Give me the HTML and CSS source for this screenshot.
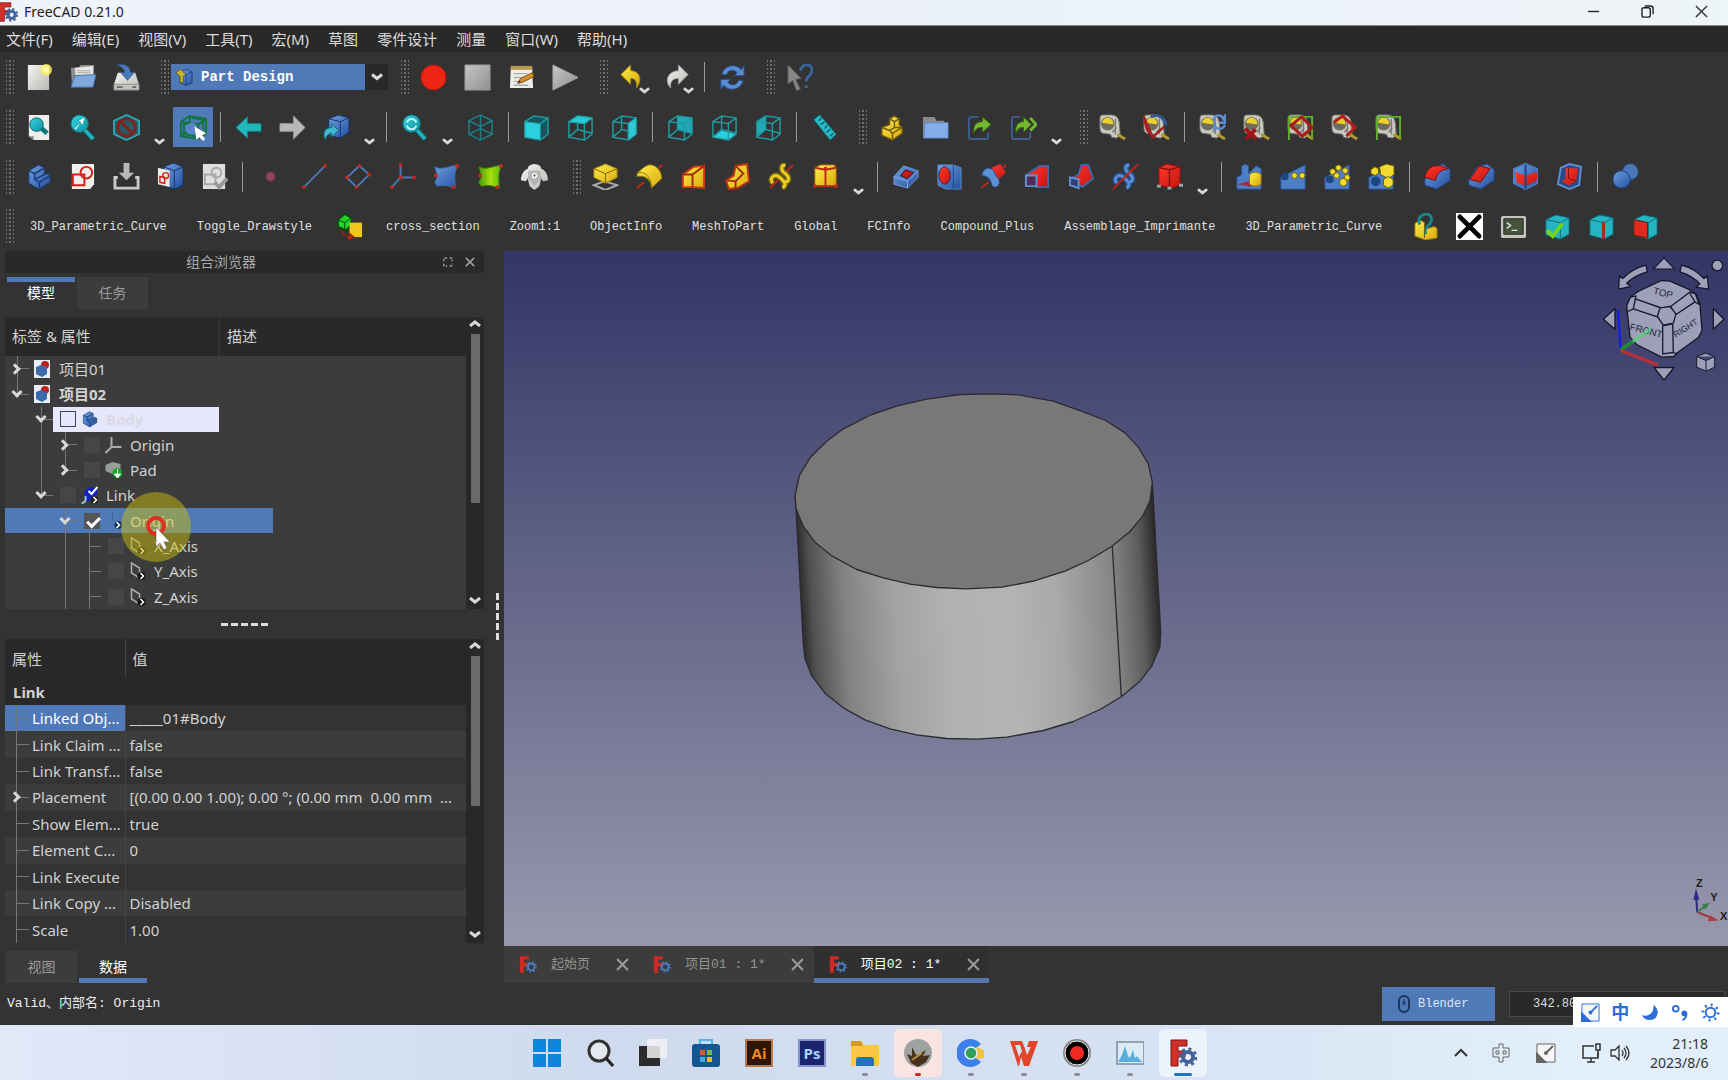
FILE: index.html
```html
<!DOCTYPE html>
<html lang="zh-CN">
<head>
<meta charset="utf-8">
<title>FreeCAD 0.21.0</title>
<link rel="stylesheet" href="styles.css">
</head>
<body>
<svg class="sprite" aria-hidden="true">
  <defs>
    <linearGradient id="gray" x1="0" y1="0" x2="1" y2="1"><stop offset="0" stop-color="#f4f4f0"/><stop offset="1" stop-color="#b8b8b4"/></linearGradient>
    <linearGradient id="dull" x1="0" y1="0" x2="1" y2="1"><stop offset="0" stop-color="#c8c8c8"/><stop offset="1" stop-color="#8e8e8e"/></linearGradient>
    <linearGradient id="blue" x1="0" y1="0" x2="1" y2="1"><stop offset="0" stop-color="#6f9fe0"/><stop offset="1" stop-color="#2350a0"/></linearGradient>
    <linearGradient id="yel" x1="0" y1="0" x2="1" y2="1"><stop offset="0" stop-color="#fdf04a"/><stop offset="1" stop-color="#d8a80c"/></linearGradient>
    <linearGradient id="red" x1="0" y1="0" x2="1" y2="1"><stop offset="0" stop-color="#ff3a2a"/><stop offset="1" stop-color="#c41410"/></linearGradient>
    <linearGradient id="teal" x1="0" y1="0" x2="1" y2="1"><stop offset="0" stop-color="#35d4e2"/><stop offset="1" stop-color="#12909c"/></linearGradient>
    <linearGradient id="green" x1="0" y1="0" x2="1" y2="0"><stop offset="0" stop-color="#4c9a08"/><stop offset=".5" stop-color="#a5e010"/><stop offset="1" stop-color="#5cb010"/></linearGradient>
  </defs>

  <symbol id="new" viewBox="0 0 28 28"><path d="M3 1h22v26H3z" fill="url(#gray)"/><circle cx="22" cy="6" r="6" fill="#f8f060" opacity=".85"/><circle cx="22" cy="6" r="3" fill="#fffcb0"/></symbol>
  <symbol id="open" viewBox="0 0 28 28"><path d="M2 4h8l2-3h14v20H3z" fill="#8d8d8a"/><path d="M6 4l19-2v14H7z" fill="#e6e6e2"/><path d="M8 7h14M8 9h14" stroke="#aaa"/><path d="M6 12l22-1-3 13H2z" fill="#7fa8dc" stroke="#3f6cab"/></symbol>
  <symbol id="save" viewBox="0 0 28 28"><path d="M5 9h18l4 12v6H1v-6z" fill="url(#gray)"/><path d="M1 21h26v6H1z" fill="#c4c4c0" stroke="#8a8a86"/><path d="M4 24h6M20 24h4" stroke="#666" stroke-width="2"/><path d="M4 1c9-2 14 2 14 8h4l-7 8-7-8h4c0-4-3-6-8-8z" fill="#4a78bd" stroke="#2c5490" stroke-width=".6"/></symbol>
  <symbol id="pd" viewBox="0 0 28 28"><path d="M8 6l10-4 8 4v16l-9 4-9-4z" fill="url(#blue)" stroke="#163465"/><path d="M8 6l9 4 9-4M17 10v16" fill="none" stroke="#163465"/><path d="M2 7l7-5 8 8-4 2v10l-5-1V12z" fill="#c9b62c" stroke="#4d4612"/></symbol>
  <symbol id="rec" viewBox="0 0 28 28"><circle cx="14" cy="14" r="13" fill="#ee2414" stroke="#b3170c"/></symbol>
  <symbol id="stop" viewBox="0 0 28 28"><path d="M1 1h26v26H1z" fill="url(#dull)" stroke="#999"/></symbol>
  <symbol id="macro" viewBox="0 0 28 28"><path d="M3 2h22l1 23H2z" fill="#eeeeea"/><path d="M3 2h22v4H3z" fill="#b49a4a"/><path d="M6 10h14M6 14h11M6 18h7M6 22h15" stroke="#aaa" stroke-width="1.5"/><path d="M10 20l3-5 12-6 2 4-12 6z" fill="#d58d2b" stroke="#84500d"/><path d="M10 20l3-1-1-2z" fill="#222"/></symbol>
  <symbol id="play" viewBox="0 0 28 28"><path d="M1 1l26 13L1 27z" fill="url(#dull)" stroke="#a5a5a5"/></symbol>
  <symbol id="undo" viewBox="0 0 28 28"><path d="M2 11L12 1v6c9 0 13 9 6 18 1-7-1-10-6-10v6z" fill="url(#yel)" stroke="#a8850d"/></symbol>
  <symbol id="redo" viewBox="0 0 28 28"><path d="M26 11L16 1v6C7 7 0 16 8 25c-1-7 2-10 8-10v6z" fill="url(#gray)" stroke="#999"/></symbol>
  <symbol id="refresh" viewBox="0 0 28 28"><path d="M3 11C5 1 18-1 23 6l3-4v10H16l3-3c-5-5-10-2-11 2zM25 17C23 27 10 29 5 22l-3 4V16h10l-3 3c5 5 10 2 11-2z" fill="#5b8bd0" stroke="#2a5292"/></symbol>
  <symbol id="whats" viewBox="0 0 28 28"><path d="M2 1l14 14-6 1 5 10-4 2-4-11-5 4z" fill="#888" stroke="#555"/><path d="M15 7c1-8 13-8 12 0 0 5-6 5-6 11M21 22v3" fill="none" stroke="#3c6498" stroke-width="3"/></symbol>

  <symbol id="fitall" viewBox="0 0 28 28"><path d="M4 1h21v26H9l-5-4z" fill="#efefea"/><path d="M4 23h5v4z" fill="#888"/><path d="M16 14l7 6" stroke="#12757e" stroke-width="5"/><circle cx="12" cy="11" r="7" fill="url(#teal)" stroke="#0b6670"/></symbol>
  <symbol id="lens" viewBox="0 0 28 28"><path d="M16 16l9 10" stroke="#0d7f8a" stroke-width="5"/><path d="M16 16l9 10" stroke="#23b5c2" stroke-width="3"/><circle cx="11" cy="10" r="9" fill="url(#teal)" stroke="#0b7882"/></symbol>
  <symbol id="fitsel" viewBox="0 0 28 28"><use href="#lens"/><path d="M6 15l7-7-3-1 6-3-2 7-2-2-5 7z" fill="#fff"/></symbol>
  <symbol id="draw" viewBox="0 0 28 28"><path d="M14 1l13 6v14l-13 6-13-6V7z" fill="#2a5a62" stroke="#27a6b0" stroke-width="2"/><circle cx="14" cy="14" r="9" fill="none" stroke="#7c2422" stroke-width="3"/><path d="M8 8l12 12" stroke="#7c2422" stroke-width="3"/></symbol>
  <symbol id="selbox" viewBox="0 0 28 28"><path d="M1 8l9-6 17 3v15l-8 6-18-3zM1 8l18 3v15M19 11l8-6M10 2v14l17 4M10 16l-9 7M4 10l12 2v11l-12-2zM12 4l12 2v11" fill="none" stroke="#117540" stroke-width="2"/><circle cx="12" cy="15" r="6" fill="#5b83c8"/><path d="M15 13l12 7-4 2 3 4-2 2-4-4-3 3z" fill="#fff"/></symbol>
  <symbol id="back" viewBox="0 0 28 28"><path d="M1 14L13 3v7h14v8H13v7z" fill="#20b7bd" stroke="#0f8288"/></symbol>
  <symbol id="fwd" viewBox="0 0 28 28"><path d="M27 14L15 2v8H1v8h14v8z" fill="#b8b8b6" stroke="#999"/></symbol>
  <symbol id="linkgo" viewBox="0 0 28 28"><path d="M6 5l10-4 11 3v15l-9 6-12-3z" fill="url(#blue)" stroke="#163465"/><path d="M6 5l12 3 9-4M18 8v17" fill="none" stroke="#163465"/><path d="M2 27c-3-9 1-13 7-13v-4l7 7-7 7v-4c-3 0-5 2-7 7z" fill="#3fb8d4" stroke="#13606f"/></symbol>
  <symbol id="sync" viewBox="0 0 28 28"><use href="#lens"/><path d="M6 9c2-5 8-5 10 0M16 12c-2 5-8 5-10 0" fill="none" stroke="#bff4f4" stroke-width="2"/></symbol>
  <symbol id="iso" viewBox="0 0 28 28"><path d="M14 1l12 6v14l-12 6-12-6V7zM2 7l12 6 12-6M14 13v14M14 1v14M2 21l12-6 12 6" fill="none" stroke="#1a8289" stroke-width="1.5"/></symbol>
  <symbol id="wire" viewBox="0 0 28 28"><path d="M2 8l9-6 15 2v17l-8 6-16-3zM2 8l16 2v17M18 10l8-6M11 2v14l15 4M11 16l-9 8" fill="none" stroke="#1c9da3" stroke-width="1.5"/></symbol>
  <symbol id="vfront" viewBox="0 0 28 28"><path d="M2 8l9-6 15 2-8 6zM18 10l8-6v17l-8 6z" fill="#15565c"/><path d="M2 8l9-6 15 2v17l-8 6-16-3zM18 10l8-6" fill="none" stroke="#1c9da3" stroke-width="1.5"/><path d="M2 8l16 2v17l-16-3z" fill="#2cd0dd" stroke="#1c9da3"/></symbol>
  <symbol id="vtop" viewBox="0 0 28 28"><use href="#wire"/><path d="M2 8l9-6 15 2-8 6z" fill="#2cc8d6" stroke="#1c9da3"/></symbol>
  <symbol id="vright" viewBox="0 0 28 28"><use href="#wire"/><path d="M18 10l8-6v17l-8 6z" fill="#2cc8d6" stroke="#1c9da3"/></symbol>
  <symbol id="vrear" viewBox="0 0 28 28"><path d="M11 2l15 2v16l-15-4z" fill="#22a8b6"/><use href="#wire"/></symbol>
  <symbol id="vbottom" viewBox="0 0 28 28"><path d="M11 17l15 4-8 6-16-3z" fill="#2cd0dd"/><use href="#wire"/></symbol>
  <symbol id="vleft" viewBox="0 0 28 28"><path d="M2 8l9-6v14l-9 8z" fill="#22a8b6"/><use href="#wire"/></symbol>
  <symbol id="ruler" viewBox="0 0 28 28"><path d="M3 6l6-5 17 20-6 6z" fill="#27bdc8" stroke="#0e7d86"/><path d="M11 4l-3 3m6 1l-4 3m7 1l-3 3m6 1l-4 3m7 1l-3 3" stroke="#0c5d65" stroke-width="1.5"/></symbol>

  <symbol id="part" viewBox="0 0 28 28"><path d="M4 14l8-3V5l5-3 5 3v6l3 3v6l-10 7-11-5z" fill="url(#yel)" stroke="#6e5a08" stroke-width="1.5"/><path d="M12 5l5 3 5-3M17 8v6l-5 3-8-3M17 14l8 0M12 17l3 3 10-6M15 20v7" fill="none" stroke="#6e5a08" stroke-width="1.5"/></symbol>
  <symbol id="group" viewBox="0 0 28 28"><path d="M1 3h12l2 4h8v18H1z" fill="#8b8b8b"/><path d="M3 9h24v16H2z" fill="#85aee8" stroke="#5b86c4"/></symbol>
  <symbol id="link" viewBox="0 0 28 28"><path d="M13 3H6Q3 3 3 6v17q0 3 3 3h14q3 0 3-3v-4" fill="none" stroke="#3d5f93" stroke-width="2"/><path d="M8 20c-1-9 3-12 9-12V3l9 8-9 8v-5c-4 0-7 1-9 6z" fill="#73b82e" stroke="#2f6310"/></symbol>
  <symbol id="links" viewBox="0 0 28 28"><path d="M10 3H5Q2 3 2 6v17q0 3 3 3h13q3 0 3-3v-4" fill="none" stroke="#3d5f93" stroke-width="2"/><path d="M6 20c-1-9 3-12 8-12V3l8 8-8 8v-5c-4 0-6 1-8 6z" fill="#73b82e" stroke="#2f6310"/><path d="M21 4l6 7-6 6" fill="none" stroke="#73b82e" stroke-width="3"/></symbol>
  <symbol id="tape" viewBox="0 0 28 28"><path d="M1 4q0-3 3-3l9 0q7 0 8 8l1 13-4 3-5-1-1-3-8-1q-3-1-3-5z" fill="#c9c9c3" stroke="#77776e"/><circle cx="9" cy="10" r="7" fill="#6d6c5e"/><path d="M3 9Q5 3 10 4q5 1 5 7z" fill="#ecd02a"/><path d="M17 5v16M14 19l4-5" stroke="#7c7c74" stroke-width="1.5"/><path d="M19 21l8 5" stroke="#b09a28" stroke-width="3"/></symbol>
  <symbol id="tapeang" viewBox="0 0 28 28"><use href="#tape"/><path d="M1 3l9 21 12-11M1 3l3 13 6 8" fill="none" stroke="#a8201c" stroke-width="2.5"/><path d="M8 3c8-4 15 2 16 9" fill="none" stroke="#2f5a96" stroke-width="3"/></symbol>
  <symbol id="taperef" viewBox="0 0 28 28"><use href="#tape"/><path d="M15 7c1-7 8-7 10-2l2-3v7h-6M27 11c-2 5-8 6-11 1v5" fill="none" stroke="#5b8bd0" stroke-width="2.5"/></symbol>
  <symbol id="tapedel" viewBox="0 0 28 28"><use href="#tape"/><path d="M2 15l12 11M13 16L3 26" stroke="#a41414" stroke-width="4"/></symbol>
  <symbol id="tapeall" viewBox="0 0 28 28"><use href="#tape"/><path d="M2 27V3h24v23" fill="none" stroke="#5fae28" stroke-width="2"/><path d="M15 3l11 11-10 9L4 12z" fill="none" stroke="#a81c18" stroke-width="3"/></symbol>
  <symbol id="tape3d" viewBox="0 0 28 28"><use href="#tape"/><path d="M3 9l9-7 13 12-9 9" fill="none" stroke="#b91c18" stroke-width="3"/></symbol>
  <symbol id="tapedelta" viewBox="0 0 28 28"><use href="#tape"/><path d="M2 27V3h24v23" fill="none" stroke="#5fae28" stroke-width="2"/></symbol>

  <symbol id="body" viewBox="0 0 28 28"><path d="M4 8l10-6 6 3v7l3-1 3 2v7l-12 7L4 21z" fill="url(#blue)" stroke="#173b74"/><path d="M4 8l6 3 10-6M10 11v6l5 3 11-7M10 17l10-5M15 20v7" fill="none" stroke="#173b74" stroke-width="1.5"/></symbol>
  <symbol id="sketch" viewBox="0 0 28 28"><path d="M3 1h23v21l-4 5H3z" fill="#f0f0ec"/><path d="M4 12h12v11H4z" fill="none" stroke="#d0201a" stroke-width="2"/><circle cx="18" cy="10" r="6" fill="none" stroke="#d0201a" stroke-width="2"/></symbol>
  <symbol id="edit" viewBox="0 0 28 28"><path d="M11 0h6v10h5l-8 8-8-8h5z" fill="#b8b8b6"/><path d="M5 15H2v11h24V15h-3" fill="none" stroke="#c9c9c9" stroke-width="3"/></symbol>
  <symbol id="mapsk" viewBox="0 0 28 28"><path d="M7 4l10-4 10 4v19l-9 4-11-4z" fill="url(#blue)" stroke="#163465"/><path d="M18 8v19M7 4l11 4 9-4" stroke="#163465" fill="none"/><path d="M1 5l12 3v17L1 22z" fill="#eeeeea"/><path d="M3 14l5 1v6l-5-1z" fill="none" stroke="#d0201a" stroke-width="1.5"/><circle cx="9" cy="13" r="3" fill="none" stroke="#d0201a" stroke-width="1.5"/></symbol>
  <symbol id="valid" viewBox="0 0 28 28"><path d="M2 1h23v26H2z" fill="#dededc"/><path d="M4 12h11v10H4z" fill="none" stroke="#a8a8a6" stroke-width="2"/><circle cx="16" cy="10" r="5" fill="none" stroke="#a8a8a6" stroke-width="2"/><path d="M14 20l5 5 8-9" fill="none" stroke="#9a9a98" stroke-width="4"/></symbol>
  <symbol id="pt" viewBox="0 0 28 28"><circle cx="14" cy="14" r="5" fill="#8d4460" stroke="#5e2a42"/></symbol>
  <symbol id="line" viewBox="0 0 28 28"><path d="M3 25L25 3" stroke="#4b78b8" stroke-width="2"/><circle cx="3" cy="25" r="2" fill="#c4271c"/><circle cx="25" cy="3" r="2" fill="#c4271c"/></symbol>
  <symbol id="plane" viewBox="0 0 28 28"><path d="M2 15L15 3l10 9-13 13z" fill="none" stroke="#4b78b8" stroke-width="2"/><g fill="#c4271c"><circle cx="2" cy="15" r="2"/><circle cx="15" cy="3" r="2"/><circle cx="25" cy="12" r="2"/><circle cx="12" cy="25" r="2"/></g></symbol>
  <symbol id="lcs" viewBox="0 0 28 28"><path d="M12 2v13h14M12 15L3 25" fill="none" stroke="#4b78b8" stroke-width="2"/><g fill="#c4271c"><circle cx="12" cy="2" r="2"/><circle cx="12" cy="15" r="2"/><circle cx="26" cy="15" r="2"/><circle cx="3" cy="25" r="2"/></g></symbol>
  <symbol id="binder" viewBox="0 0 28 28"><path d="M2 4c7 4 15-1 24-2-5 8-3 15-3 24-6-2-12-4-18-2-2-1-3-3-3-5 4-3 2-8 0-15z" fill="url(#blue)" stroke="#3b6cba"/><g fill="#c4271c"><circle cx="25" cy="3" r="2"/><circle cx="3" cy="13" r="2"/><circle cx="21" cy="25" r="2"/></g></symbol>
  <symbol id="subbinder" viewBox="0 0 28 28"><path d="M2 4c7 4 15-1 24-2-5 8-3 15-3 24-6-2-12-4-18-2-2-1-3-3-3-5 4-3 2-8 0-15z" fill="url(#green)" stroke="#3b8a10"/><g fill="#c4271c"><circle cx="25" cy="3" r="2"/><circle cx="3" cy="13" r="2"/><circle cx="21" cy="25" r="2"/></g></symbol>
  <symbol id="clone" viewBox="0 0 28 28"><path d="M8 3q6-4 12 0l1 3c5 2 7 7 7 12l-5 1-2-3-2 8-5 4-5-4-2-8-2 3-5-1C0 13 2 8 7 6z" fill="url(#gray)"/><path d="M8 8l12 0 1 8-7 8-7-8z" fill="#b4b4b2"/><circle cx="14" cy="13" r="3" fill="#eee"/><circle cx="14" cy="13" r="1" fill="#444"/></symbol>

  <symbol id="pad" viewBox="0 0 28 28"><path d="M2 23l11-4 13 4-12 5z" fill="none" stroke="#aaa" stroke-width="2"/><path d="M2 6l12-5 12 5v9l-12 6-12-6z" fill="url(#yel)" stroke="#a18312"/><path d="M2 6l12 5 12-5M14 11v10" fill="none" stroke="#7c6409"/></symbol>
  <symbol id="rev" viewBox="0 0 28 28"><path d="M1 11C5 7 9 3 13 2c7-1 13 5 14 14l-11 10c0-8-6-14-15-12z" fill="url(#yel)" stroke="#8a7008"/><path d="M1 11c8-4 15 4 15 15" fill="none" stroke="#8a7008"/><path d="M1 26l7-6M23 6l4-4" stroke="#c4271c" stroke-width="2"/></symbol>
  <symbol id="loft" viewBox="0 0 28 28"><path d="M3 12L14 4l11-1v23l-12-1H3z" fill="url(#yel)" stroke="#d03610" stroke-width="2"/><path d="M3 12h10v13M13 12l12-9" fill="none" stroke="#a42a0c" stroke-width="2"/></symbol>
  <symbol id="pipe" viewBox="0 0 28 28"><path d="M2 18l8-5 2-10 12-2 2 18-12 7-9 1z" fill="url(#yel)" stroke="#c03010" stroke-width="2"/><path d="M2 18l10 1v8M12 19l8-8L12 3" fill="none" stroke="#a42a0c" stroke-width="2"/></symbol>
  <symbol id="helix" viewBox="0 0 28 28"><path d="M2 26L26 2" stroke="#c4271c" stroke-width="2"/><path d="M18 2c-5 0-5 6 0 9 5 4 4 10-1 8M15 26c6-4 0-9-4-12-5-3-10 2-6 7" fill="none" stroke="#7d680e" stroke-width="6"/><path d="M18 2c-5 0-5 6 0 9 5 4 4 10-1 8M15 26c6-4 0-9-4-12-5-3-10 2-6 7" fill="none" stroke="#e8ce24" stroke-width="3"/></symbol>
  <symbol id="prim" viewBox="0 0 28 28"><path d="M3 5l6-3h14l2 3v19H3z" fill="url(#yel)" stroke="#c46a10"/><path d="M14 5v19M3 24h22M3 5l11 2 11-2" stroke="#b72a10" stroke-width="2" fill="none"/><g fill="#c4271c"><circle cx="14" cy="6" r="2"/><circle cx="3" cy="24" r="2"/><circle cx="25" cy="24" r="2"/></g></symbol>
  <symbol id="pocket" viewBox="0 0 28 28"><path d="M2 14L12 3l15 5v7L16 26 2 22z" fill="url(#blue)" stroke="#6b98d8"/><path d="M2 14l14 5 11-11M16 19v7" fill="none" stroke="#8ab0e8"/><path d="M9 13l5-6 8 3-6 6z" fill="#c41c18" stroke="#470a08"/></symbol>
  <symbol id="hole" viewBox="0 0 28 28"><path d="M2 2h16l8 3v22H10l-8-4z" fill="url(#blue)" stroke="#5b88cc"/><path d="M18 2v25" stroke="#1e478a"/><ellipse cx="9" cy="13" rx="6" ry="9" fill="url(#red)" stroke="#163465"/></symbol>
  <symbol id="groove" viewBox="0 0 28 28"><path d="M12 5l9-4 6 9-8 7z" fill="url(#red)"/><path d="M2 13C3 4 12 3 15 10c1 5 5 5 5 10 0 5-6 7-8 2-1-6-5-9-10-9z" fill="#5d8fd2" stroke="#25569c"/><path d="M1 26l8-6M23 6l4-4" stroke="#c4271c" stroke-width="2"/></symbol>
  <symbol id="sloft" viewBox="0 0 28 28"><path d="M3 12L16 3h9v22H13z" fill="url(#red)" stroke="#3d68aa" stroke-width="2"/><path d="M2 13h11v11H2z" fill="#4b2d55" stroke="#6590d0" stroke-width="2"/></symbol>
  <symbol id="spipe" viewBox="0 0 28 28"><path d="M3 16l8-4L14 2l7 0 5 14-11 9z" fill="url(#red)" stroke="#3d68aa" stroke-width="2"/><path d="M2 15l9 2v9l-9-3z" fill="#2a3f74" stroke="#6590d0" stroke-width="2"/></symbol>
  <symbol id="shelix" viewBox="0 0 28 28"><path d="M18 2c-5 0-5 6 0 9 5 4 4 10-1 8M15 26c6-4 0-9-4-12-5-3-10 2-6 7" fill="none" stroke="#23508e" stroke-width="6"/><path d="M18 2c-5 0-5 6 0 9 5 4 4 10-1 8M15 26c6-4 0-9-4-12-5-3-10 2-6 7" fill="none" stroke="#5a8cd4" stroke-width="3"/><path d="M1 27L27 1" stroke="#b4271c" stroke-width="2"/></symbol>
  <symbol id="sprim" viewBox="0 0 28 28"><path d="M3 5l8-4 14 3v19l-9 3-13-3z" fill="url(#red)" stroke="#8c100c"/><path d="M14 7v19M3 5l11 2 11-3" stroke="#8c100c" stroke-width="1.5" fill="none"/><path d="M1 24h4M12 26h4M24 23h4" stroke="#9aa" stroke-width="3"/></symbol>

  <symbol id="step" viewBox="0 0 28 28"><path d="M1 27V15L26 2v25z" fill="#4d7fc8" stroke="#2d5a9e"/></symbol>
  <symbol id="mirror" viewBox="0 0 28 28"><path d="M1 27V15l5-3V3q4-3 7 0v8l8-8 5 3v21z" fill="#4d7fc8" stroke="#2d5a9e"/><path d="M1 22l12-3 3 6z" fill="#9c3040"/><path d="M14 12q6-5 12 0v10q-6 4-12 0z" fill="url(#yel)" stroke="#8c7309"/></symbol>
  <symbol id="linpat" viewBox="0 0 28 28"><use href="#step"/><circle cx="5" cy="14" r="4" fill="#1d4684"/><g fill="#f3dc31" stroke="#695607"><circle cx="15" cy="13" r="3"/><circle cx="23" cy="13" r="3"/></g></symbol>
  <symbol id="polpat" viewBox="0 0 28 28"><use href="#step"/><circle cx="6" cy="17" r="4" fill="#1d4684"/><g fill="#f3dc31" stroke="#695607"><circle cx="9" cy="9" r="3"/><circle cx="15" cy="5" r="3"/><circle cx="22" cy="8" r="3"/><circle cx="24" cy="15" r="3"/><circle cx="13" cy="13" r="3"/><circle cx="20" cy="20" r="4"/></g></symbol>
  <symbol id="multi" viewBox="0 0 28 28"><use href="#step"/><circle cx="8" cy="19" r="5" fill="#1d4684"/><g fill="#f3dc31" stroke="#695607"><path d="M3 7l4-3 4 2v5l-4 2-4-2z"/><path d="M12 4l7-3 8 2v9l-6 4-8-4z"/><path d="M16 17l5-3 5 3v6l-5 3-5-3z"/></g></symbol>
  <symbol id="solid" viewBox="0 0 28 28"><path d="M1 17L10 4l10-3 7 6v11L13 27 1 23z" fill="url(#blue)" stroke="#20488c"/></symbol>
  <symbol id="fillet" viewBox="0 0 28 28"><use href="#solid"/><path d="M1 14C4 4 10 2 18 3l7 3c-8 1-12 5-13 12l-11-3z" fill="url(#red)" stroke="#7b100c"/></symbol>
  <symbol id="chamfer" viewBox="0 0 28 28"><use href="#solid"/><path d="M2 17L12 3l11 3-10 14z" fill="url(#red)" stroke="#7b100c"/></symbol>
  <symbol id="draft" viewBox="0 0 28 28"><path d="M2 6l12-5 12 5v15l-12 6-12-6z" fill="url(#blue)" stroke="#4b7bc4" stroke-width="2"/><path d="M3 9l11 4 12-4v9l-12 6-9-4z" fill="url(#red)"/><path d="M14 2v25" stroke="#1e4486" stroke-width="2"/></symbol>
  <symbol id="thick" viewBox="0 0 28 28"><path d="M5 5l9-4 12 3-2 19-10 4-12-5z" fill="#284a86" stroke="#5e8ed2" stroke-width="2"/><path d="M10 5l13 1-2 13-8 4-7-4 4-3z" fill="url(#red)"/><path d="M13 5v11l8 3" stroke="#7b100c" fill="none"/></symbol>
  <symbol id="bool" viewBox="0 0 28 28"><circle cx="19" cy="9" r="8" fill="#4a77b8" stroke="#335c98"/><circle cx="10" cy="17" r="9" fill="url(#blue)" stroke="#1e4486"/></symbol>

  <symbol id="gcube" viewBox="0 0 28 28"><path d="M2 7l7-6 7 4v8l-6 5-8-4z" fill="#1fd227" stroke="#0c4a0e" stroke-width="2"/><path d="M2 7l7 3 7-5M9 10v8" fill="none" stroke="#0c4a0e"/><path d="M14 10h13v15H14z" fill="#f0c81c"/><path d="M6 18c0 4 3 6 9 6l-1-3 5 4-5 3" fill="#c02412" stroke="#8d1408"/></symbol>
  <symbol id="lock" viewBox="0 0 28 28"><path d="M3 11l5-4 5 3v7l10-3 3 2v10l-12 2-11-4z" fill="url(#yel)" stroke="#8d7612"/><path d="M8 12C3 0 22-3 20 8c-1 6-8 5-6 14" fill="none" stroke="#168890" stroke-width="3"/><path d="M13 12v14" stroke="#6e5a08"/></symbol>
  <symbol id="bigx" viewBox="0 0 28 28"><path d="M0 0h28v28H0z" fill="#fff"/><path d="M4 4l20 20M24 4L4 24" stroke="#000" stroke-width="5" stroke-linecap="round"/></symbol>
  <symbol id="term" viewBox="0 0 28 28"><rect x="1" y="3" width="26" height="23" rx="2" fill="#c4c4bc"/><path d="M4 6h20v16H4z" fill="#46543a" stroke="#222"/><path d="M7 10l4 3-4 3M12 18h6" stroke="#dde" fill="none" stroke-width="1.5"/></symbol>
  <symbol id="tcube" viewBox="0 0 28 28"><path d="M2 7l10-5 14 3v17l-9 5-15-4z" fill="#25b4c2" stroke="#0d6c76"/><path d="M2 7l15 3v17M17 10l9-5" fill="none" stroke="#0d6c76"/></symbol>
  <symbol id="tcheck" viewBox="0 0 28 28"><use href="#tcube"/><path d="M3 18l6 6L19 11" fill="none" stroke="#73d51a" stroke-width="4"/></symbol>
  <symbol id="tred" viewBox="0 0 28 28"><use href="#tcube"/><path d="M16 9v18" stroke="#b8231a" stroke-width="3"/></symbol>
  <symbol id="tface" viewBox="0 0 28 28"><use href="#tcube"/><path d="M2 7l14 3v16L2 23z" fill="#e02a1c" stroke="#7b100c"/></symbol>

  <symbol id="fc" viewBox="0 0 28 28"><path d="M2 1h16v6H9v5h7v6H9v9H2z" fill="#d0302a" stroke="#7b1412"/><circle cx="19" cy="18" r="5" fill="none" stroke="#43639a" stroke-width="4"/><circle cx="19" cy="18" r="8" fill="none" stroke="#43639a" stroke-width="3" stroke-dasharray="3 3.3"/></symbol>
  <symbol id="fctab" viewBox="0 0 22 22"><path d="M1 1h11v4H6v4h5v4H6v8H1z" fill="#cc2a22"/><circle cx="15" cy="14" r="4" fill="none" stroke="#4d7cc4" stroke-width="2"/><circle cx="15" cy="14" r="6" fill="none" stroke="#4d7cc4" stroke-width="2" stroke-dasharray="2 2.7"/></symbol>
  <symbol id="doc" viewBox="0 0 16 18"><path d="M0 0h16v18H0z" fill="#e8eef6"/><circle cx="11" cy="5" r="4" fill="#c22018"/><path d="M2 7l5-2 6 2v7l-5 3-6-3z" fill="#3c6ba9"/></symbol>
  <symbol id="axes" viewBox="0 0 16 18"><path d="M6 1v10h10M6 11l-6 6" fill="none" stroke="#aaa" stroke-width="2"/></symbol>
  <symbol id="tpad" viewBox="0 0 16 18"><path d="M0 4l7-3 8 2v6l-8 4-7-3z" fill="#999d99"/><circle cx="12" cy="12" r="5" fill="#18a428"/><path d="M12 8v5m-3 0h6l-3 4z" fill="#e8ffe8" stroke="#e8ffe8"/></symbol>
  <symbol id="tlink" viewBox="0 0 16 18"><path d="M3 5l5-4h6l2 4-2 8-8 2-3-4z" fill="#1420c4"/><path d="M7 5l3 3 6-7" fill="none" stroke="#fff" stroke-width="2"/><path d="M0 17c3 0 5-2 4-7" fill="none" stroke="#8fc8e8" stroke-width="2"/><circle cx="13" cy="14" r="4" fill="#222"/><path d="M12 11l3 3-3 3" fill="none" stroke="#fff" stroke-width="1.5"/></symbol>
  <symbol id="taxes" viewBox="0 0 16 18"><path d="M7 0v8" stroke="#3e6296"/><circle cx="13" cy="13" r="4" fill="#173354"/><path d="M11 10l3 3-3 3" fill="none" stroke="#fff" stroke-width="1.5"/></symbol>
  <symbol id="taxis" viewBox="0 0 16 18"><path d="M2 1l8 5v10l-8-5z" fill="none" stroke="#aaa" stroke-width="1.5"/><circle cx="12" cy="14" r="4" fill="#111"/><path d="M11 11l3 3-3 3" fill="none" stroke="#fff" stroke-width="1.5"/></symbol>
  <symbol id="down" viewBox="0 0 12 8"><path d="M1 1l5 4 5-4" fill="none" stroke="#d8d8d8" stroke-width="3"/></symbol>
  <symbol id="up" viewBox="0 0 12 8"><path d="M1 7l5-4 5 4" fill="none" stroke="#d8d8d8" stroke-width="3"/></symbol>
  <symbol id="close" viewBox="0 0 12 12"><path d="M1 1l10 10M11 1L1 11" fill="none" stroke="currentColor" stroke-width="2"/></symbol>
  <symbol id="pen" viewBox="0 0 20 20"><path d="M1 1h18v18H1z" fill="#f6f6f6" stroke="currentColor"/><path d="M1 11l8 8H1zM17 3l-6 6" fill="currentColor" stroke="currentColor" stroke-width="2"/><circle cx="10" cy="10" r="2" fill="currentColor"/></symbol>
</svg>

<header class="titlebar">
  <svg class="titlebar-logo"><use href="#fc"/></svg>
  <h1>FreeCAD 0.21.0</h1>
  <div class="wincontrols">
    <button aria-label="最小化"><svg viewBox="0 0 14 14"><path d="M1 7h12" stroke="#222" stroke-width="1.5"/></svg></button>
    <button aria-label="还原"><svg viewBox="0 0 14 14"><rect x="1" y="3" width="9" height="10" rx="2" fill="none" stroke="#222" stroke-width="1.5"/><path d="M4 1h6q3 0 3 3v6" fill="none" stroke="#222" stroke-width="1.5"/></svg></button>
    <button aria-label="关闭"><svg viewBox="0 0 14 14"><path d="M1 1l12 12M13 1L1 13" stroke="#333" stroke-width="1.5"/></svg></button>
  </div>
</header>

<nav class="menubar">
  <button>文件(F)</button><button>编辑(E)</button><button>视图(V)</button><button>工具(T)</button><button>宏(M)</button><button>草图</button><button>零件设计</button><button>测量</button><button>窗口(W)</button><button>帮助(H)</button>
</nav>

<div class="toolbars">
  <div class="row">
    <i class="grip"></i>
    <button class="tb" aria-label="新建"><svg><use href="#new"/></svg></button><button class="tb" aria-label="打开"><svg><use href="#open"/></svg></button><button class="tb" aria-label="保存"><svg><use href="#save"/></svg></button>
    <i class="grip"></i>
    <div class="workbench"><svg class="wb-icon"><use href="#pd"/></svg><select aria-label="工作台"><option>Part Design</option></select><svg class="wb-arrow"><use href="#down"/></svg></div>
    <i class="grip"></i>
    <button class="tb" aria-label="录制宏"><svg><use href="#rec"/></svg></button><button class="tb" aria-label="停止"><svg><use href="#stop"/></svg></button><button class="tb" aria-label="宏"><svg><use href="#macro"/></svg></button><button class="tb" aria-label="执行"><svg><use href="#play"/></svg></button>
    <i class="grip"></i>
    <button class="tb tb-drop" aria-label="撤销"><svg><use href="#undo"/></svg><svg class="mini"><use href="#down"/></svg></button><button class="tb tb-drop" aria-label="重做"><svg><use href="#redo"/></svg><svg class="mini"><use href="#down"/></svg></button>
    <i class="sep"></i>
    <button class="tb" aria-label="刷新"><svg><use href="#refresh"/></svg></button>
    <i class="grip"></i>
    <button class="tb" aria-label="这是什么"><svg><use href="#whats"/></svg></button>
  </div>
  <div class="row">
    <i class="grip"></i>
    <button class="tb" aria-label="适合全部"><svg><use href="#fitall"/></svg></button><button class="tb" aria-label="适合选择"><svg><use href="#fitsel"/></svg></button><button class="tb" aria-label="绘制样式"><svg><use href="#draw"/></svg></button><button class="drop" aria-label="更多"><svg><use href="#down"/></svg></button>
    <button class="tb tb-on" aria-label="边界框"><svg><use href="#selbox"/></svg></button>
    <i class="sep"></i>
    <button class="tb" aria-label="后退"><svg><use href="#back"/></svg></button><button class="tb" aria-label="前进"><svg><use href="#fwd"/></svg></button><button class="tb" aria-label="链接导航"><svg><use href="#linkgo"/></svg></button><button class="drop" aria-label="更多"><svg><use href="#down"/></svg></button>
    <i class="sep"></i>
    <button class="tb" aria-label="同步视图"><svg><use href="#sync"/></svg></button><button class="drop" aria-label="更多"><svg><use href="#down"/></svg></button><button class="tb" aria-label="等轴"><svg><use href="#iso"/></svg></button>
    <i class="sep"></i>
    <button class="tb" aria-label="前视"><svg><use href="#vfront"/></svg></button><button class="tb" aria-label="俯视"><svg><use href="#vtop"/></svg></button><button class="tb" aria-label="右视"><svg><use href="#vright"/></svg></button>
    <i class="sep"></i>
    <button class="tb" aria-label="后视"><svg><use href="#vrear"/></svg></button><button class="tb" aria-label="底视"><svg><use href="#vbottom"/></svg></button><button class="tb" aria-label="左视"><svg><use href="#vleft"/></svg></button>
    <i class="sep"></i>
    <button class="tb" aria-label="测量距离"><svg><use href="#ruler"/></svg></button>
    <i class="grip"></i>
    <button class="tb" aria-label="零件"><svg><use href="#part"/></svg></button><button class="tb" aria-label="组"><svg><use href="#group"/></svg></button><button class="tb" aria-label="链接"><svg><use href="#link"/></svg></button><button class="tb" aria-label="链接操作"><svg><use href="#links"/></svg></button><button class="drop" aria-label="更多"><svg><use href="#down"/></svg></button>
    <i class="grip"></i>
    <button class="tb" aria-label="线性测量"><svg><use href="#tape"/></svg></button><button class="tb" aria-label="角度测量"><svg><use href="#tapeang"/></svg></button>
    <i class="sep"></i>
    <button class="tb" aria-label="刷新测量"><svg><use href="#taperef"/></svg></button><button class="tb" aria-label="清除测量"><svg><use href="#tapedel"/></svg></button><button class="tb" aria-label="切换全部"><svg><use href="#tapeall"/></svg></button><button class="tb" aria-label="切换3D"><svg><use href="#tape3d"/></svg></button><button class="tb" aria-label="切换增量"><svg><use href="#tapedelta"/></svg></button>
  </div>
  <div class="row row-design">
    <i class="grip"></i>
    <button class="tb" aria-label="实体"><svg><use href="#body"/></svg></button><button class="tb" aria-label="新建草图"><svg><use href="#sketch"/></svg></button><button class="tb" aria-label="编辑草图"><svg><use href="#edit"/></svg></button><button class="tb" aria-label="映射草图"><svg><use href="#mapsk"/></svg></button><button class="tb" aria-label="验证草图"><svg><use href="#valid"/></svg></button>
    <i class="sep"></i>
    <button class="tb" aria-label="基准点"><svg><use href="#pt"/></svg></button><button class="tb" aria-label="基准线"><svg><use href="#line"/></svg></button><button class="tb" aria-label="基准面"><svg><use href="#plane"/></svg></button><button class="tb" aria-label="坐标系"><svg><use href="#lcs"/></svg></button><button class="tb" aria-label="形体绑定"><svg><use href="#binder"/></svg></button><button class="tb" aria-label="子形体绑定"><svg><use href="#subbinder"/></svg></button><button class="tb" aria-label="克隆"><svg><use href="#clone"/></svg></button>
    <i class="grip"></i>
    <button class="tb" aria-label="凸台"><svg><use href="#pad"/></svg></button><button class="tb" aria-label="旋转体"><svg><use href="#rev"/></svg></button><button class="tb" aria-label="放样"><svg><use href="#loft"/></svg></button><button class="tb" aria-label="扫掠"><svg><use href="#pipe"/></svg></button><button class="tb" aria-label="螺旋"><svg><use href="#helix"/></svg></button><button class="tb" aria-label="图元"><svg><use href="#prim"/></svg></button><button class="drop" aria-label="更多"><svg><use href="#down"/></svg></button>
    <i class="sep"></i>
    <button class="tb" aria-label="凹坑"><svg><use href="#pocket"/></svg></button><button class="tb" aria-label="孔"><svg><use href="#hole"/></svg></button><button class="tb" aria-label="旋转槽"><svg><use href="#groove"/></svg></button><button class="tb" aria-label="减料放样"><svg><use href="#sloft"/></svg></button><button class="tb" aria-label="减料扫掠"><svg><use href="#spipe"/></svg></button><button class="tb" aria-label="减料螺旋"><svg><use href="#shelix"/></svg></button><button class="tb" aria-label="减料图元"><svg><use href="#sprim"/></svg></button><button class="drop" aria-label="更多"><svg><use href="#down"/></svg></button>
    <i class="sep"></i>
    <button class="tb" aria-label="镜像"><svg><use href="#mirror"/></svg></button><button class="tb" aria-label="线性阵列"><svg><use href="#linpat"/></svg></button><button class="tb" aria-label="环形阵列"><svg><use href="#polpat"/></svg></button><button class="tb" aria-label="多重变换"><svg><use href="#multi"/></svg></button>
    <i class="sep"></i>
    <button class="tb" aria-label="圆角"><svg><use href="#fillet"/></svg></button><button class="tb" aria-label="倒角"><svg><use href="#chamfer"/></svg></button><button class="tb" aria-label="拔模"><svg><use href="#draft"/></svg></button><button class="tb" aria-label="抽壳"><svg><use href="#thick"/></svg></button>
    <i class="sep"></i>
    <button class="tb" aria-label="布尔"><svg><use href="#bool"/></svg></button>
  </div>
  <div class="row">
    <i class="grip"></i>
    <div class="macros"><button class="tt">3D_Parametric_Curve</button><button class="tt">Toggle_Drawstyle</button><button class="tb" aria-label="宏方块"><svg><use href="#gcube"/></svg></button><button class="tt">cross_section</button><button class="tt">Zoom1:1</button><button class="tt">ObjectInfo</button><button class="tt">MeshToPart</button><button class="tt">Global</button><button class="tt">FCInfo</button><button class="tt">Compound_Plus</button><button class="tt">Assemblage_Imprimante</button><button class="tt">3D_Parametric_Curve</button></div>
    <button class="tb" aria-label="锁定"><svg><use href="#lock"/></svg></button><button class="tb" aria-label="X"><svg><use href="#bigx"/></svg></button><button class="tb" aria-label="终端"><svg><use href="#term"/></svg></button><button class="tb" aria-label="检查"><svg><use href="#tcheck"/></svg></button><button class="tb" aria-label="剖切"><svg><use href="#tred"/></svg></button><button class="tb" aria-label="面"><svg><use href="#tface"/></svg></button>
  </div>
</div>

<main class="workspace">
  <aside class="dock">
    <div class="dock-title"><span>组合浏览器</span><button aria-label="浮动"><svg viewBox="0 0 12 12"><path d="M1 5V1h4M8 1h3v4M1 8v3h4M8 11h3V8" fill="none" stroke="#888" stroke-width="2" stroke-dasharray="3 2"/></svg></button><button aria-label="关闭"><svg><use href="#close"/></svg></button></div>
    <div class="tabs tabs-top"><button class="tab tab-on">模型</button><button class="tab">任务</button></div>

    <section class="panel panel-tree">
      <div class="panel-main">
        <div class="tree-head"><span>标签 &amp; 属性</span><span>描述</span></div>
        <div class="tree" role="tree">
          <div class="node"><i class="g tee"><b class="ex shut"></b></i><svg><use href="#doc"/></svg><span>项目01</span></div>
          <div class="node strong"><i class="g end"><b class="ex"></b></i><svg><use href="#doc"/></svg><span>项目02</span></div>
          <div class="node"><i class="g"></i><i class="g tee"><b class="ex"></b></i><label class="lit"><input type="checkbox"><svg><use href="#body"/></svg><span>Body</span></label></div>
          <div class="node"><i class="g"></i><i class="g bar"></i><i class="g tee"><b class="ex shut"></b></i><label><input type="checkbox"><svg><use href="#axes"/></svg><span>Origin</span></label></div>
          <div class="node"><i class="g"></i><i class="g bar"></i><i class="g end"><b class="ex shut"></b></i><label><input type="checkbox"><svg><use href="#tpad"/></svg><span>Pad</span></label></div>
          <div class="node"><i class="g"></i><i class="g end"><b class="ex"></b></i><label><input type="checkbox"><svg><use href="#tlink"/></svg><span>Link</span></label></div>
          <div class="node picked"><i class="g"></i><i class="g"></i><i class="g tee"><b class="ex"></b></i><label><input type="checkbox" checked><svg><use href="#taxes"/></svg><span>Origin</span></label></div>
          <div class="node"><i class="g"></i><i class="g"></i><i class="g bar"></i><i class="g tee"></i><label><input type="checkbox"><svg><use href="#taxis"/></svg><span>X_Axis</span></label></div>
          <div class="node"><i class="g"></i><i class="g"></i><i class="g bar"></i><i class="g tee"></i><label><input type="checkbox"><svg><use href="#taxis"/></svg><span>Y_Axis</span></label></div>
          <div class="node"><i class="g"></i><i class="g"></i><i class="g bar"></i><i class="g tee"></i><label><input type="checkbox"><svg><use href="#taxis"/></svg><span>Z_Axis</span></label></div>
          <svg class="pointer" viewBox="0 0 72 72"><circle cx="36" cy="36" r="35" fill="#c8bc10" opacity=".5"/><circle cx="36" cy="35" r="8" fill="none" stroke="#e0301c" stroke-width="4"/><path d="M36 36v20l4-4 4 7 3-2-3-6h6z" fill="#fff" stroke="#555" stroke-width=".6"/></svg>
        </div>
      </div>
      <div class="scroll"><svg><use href="#up"/></svg><div class="track"><div class="thumb thumb-tree"></div></div><svg><use href="#down"/></svg></div>
    </section>

    <div class="split-h"></div>

    <section class="panel panel-props">
      <table class="props">
        <thead><tr><th>属性</th><th>值</th></tr></thead>
        <tbody>
          <tr class="grp"><th colspan="2">Link</th></tr>
          <tr class="sel"><td>Linked Obj...</td><td>_____01#Body</td></tr>
          <tr><td>Link Claim ...</td><td>false</td></tr>
          <tr><td>Link Transf...</td><td>false</td></tr>
          <tr><td><b class="ex shut"></b>Placement</td><td>[(0.00 0.00 1.00); 0.00 °; (0.00 mm&nbsp; 0.00 mm&nbsp; ...</td></tr>
          <tr><td>Show Elem...</td><td>true</td></tr>
          <tr><td>Element C...</td><td>0</td></tr>
          <tr><td>Link Execute</td><td></td></tr>
          <tr><td>Link Copy ...</td><td>Disabled</td></tr>
          <tr><td>Scale</td><td>1.00</td></tr>
        </tbody>
      </table>
      <div class="scroll"><svg><use href="#up"/></svg><div class="track"><div class="thumb thumb-props"></div></div><svg><use href="#down"/></svg></div>
    </section>
    <div class="tabs tabs-bottom"><button class="tab">视图</button><button class="tab tab-on">数据</button></div>
  </aside>

  <div class="split-v"></div>

  <section class="mdi">
    <div class="view3d">
      <svg viewBox="504 251 1224 694" role="img" aria-label="3D 视图">
        <defs><linearGradient id="side" gradientUnits="userSpaceOnUse" x1="117" y1="600" x2="1190" y2="536">
          <stop offset="0" stop-color="#2c2c2c"/><stop offset=".03" stop-color="#505050"/><stop offset=".12" stop-color="#828282"/><stop offset=".26" stop-color="#a2a2a2"/><stop offset=".42" stop-color="#b2b2b2"/><stop offset=".58" stop-color="#b4b4b4"/><stop offset=".72" stop-color="#a8a8a8"/><stop offset=".87" stop-color="#868686"/><stop offset=".95" stop-color="#5c5c5c"/><stop offset="1" stop-color="#262626"/>
        </linearGradient></defs>
        <g transform="translate(760 370) scale(.33333)" stroke="#2b2b2f" stroke-width="4" stroke-linejoin="round">
          <path d="M105 375L108 415 130 820 135 865 155 915 195 968 250 1012 315 1048 390 1075 470 1093 560 1104 650 1106 740 1100 850 1080 940 1053 1020 1017 1085 978 1140 932 1175 887 1200 828 1202 780 1177 335z" fill="url(#side)"/>
          <path d="M105 375L118 315 150 262 200 212 250 175 335 132 412 106 500 86 600 72 700 70 775 73 880 92 970 124 1037 150 1095 187 1135 230 1165 280 1177 335 1170 392 1148 437 1110 483 1055 528 985 570 915 602 820 632 725 650 620 655 530 651 450 641 370 622 290 597 217 557 165 515 130 468 108 415z" fill="#787878"/>
          <path d="M1057 528L1084 977"/>
        </g>
        <g transform="translate(1580 240) scale(.33333)" fill="#9da0b8" stroke="#16182c" stroke-width="4" stroke-linejoin="round">
          <path d="M252 52l32 34h-64zM252 418l30-37h-60zM70 236l35-32v62zM432 236l-32-32v62z"/>
          <path d="M198 74l4 20q-38 10-62 34l12 10-36 8 2-40 10 8q30-30 70-40zM304 74l-4 20q38 12 60 36l-12 10 38 6-4-40-10 8q-28-30-68-40z"/>
          <circle cx="412" cy="75" r="16"/>
          <path d="M350 348l26-10 28 10v32l-26 12-28-12zM350 348l28 12 26-12M378 360v32" stroke-width="3"/>
          <path d="M176 152L245 120 270 122 325 146 348 160 360 190 366 270 356 290 290 338 282 348 245 350 170 312 150 290 140 196 152 168z"/>
          <path d="M166 175l74 26-8 28-72-24zM240 202l30-4 18 22-8 28-30 6-18-26zM272 198l56-42 17 28-57 38zM248 256l30-6 2 86-32 4zM152 170l16-4-8 39-16 8M328 154l18 6 12 32-13-8M248 340l32-4 10 4" fill="none"/>
          <g fill="#22253c" stroke="none" font-family="Liberation Sans, sans-serif" font-size="29"><text x="148" y="268" transform="rotate(14 148 268)">FRONT</text><text x="287" y="292" font-size="26" transform="rotate(-32 287 292)">RIGHT</text><text x="218" y="160" transform="rotate(14 218 160)">TOP</text></g>
          <path d="M122 328l-8-120" stroke="#1a22d8" stroke-width="8"/><path d="M122 328l90-62" stroke="#5ad878" stroke-width="10" opacity=".75"/><path d="M122 328l36-25" stroke="#1c8a30" stroke-width="10"/><path d="M122 330l112 44" stroke="#b83038" stroke-width="10"/>
        </g>
        <g transform="translate(1360 860) scale(.33333)" stroke-width="6"><path d="M1012 156l-4-50" stroke="#2a2a80"/><path d="M1000 118l8-34 10 34z" fill="#2a2a80"/><path d="M1012 154l28-20" stroke="#3c7e50"/><path d="M1026 132l24-6-14 22z" fill="#3c7e50"/><path d="M1014 156l46 18" stroke="#a03a40"/><path d="M1050 164l26 16-32 2z" fill="#b03a40"/>
          <g fill="#1c1c20" font-family="Liberation Sans, sans-serif" font-weight="bold" font-size="33"><text x="1008" y="80">Z</text><text x="1051" y="123">Y</text><text x="1080" y="178">X</text></g></g>
      </svg>
    </div>
    <div class="doctabs">
      <div class="doctab"><svg class="fcicon"><use href="#fctab"/></svg><a href="#start">起始页</a><button aria-label="关闭"><svg><use href="#close"/></svg></button></div>
      <div class="doctab"><svg class="fcicon"><use href="#fctab"/></svg><a href="#p1">项目01 : 1*</a><button aria-label="关闭"><svg><use href="#close"/></svg></button></div>
      <div class="doctab doctab-on"><svg class="fcicon"><use href="#fctab"/></svg><a href="#p2">项目02 : 1*</a><button aria-label="关闭"><svg><use href="#close"/></svg></button></div>
    </div>
  </section>
</main>

<footer class="status">
  <span class="status-msg">Valid、内部名: Origin</span>
  <button class="navstyle"><svg viewBox="0 0 14 18"><rect x="2" y="1" width="10" height="16" rx="5" fill="none" stroke="#1c3357" stroke-width="2"/><path d="M7 4v4M5 7l4 3M9 7l-4 3" stroke="#1c3357"/></svg>Blender</button>
  <input class="dims" aria-label="尺寸" value="342.80" readonly>
  <div class="ime">
    <svg class="c-blue" viewBox="0 0 20 20"><use href="#pen"/></svg>
    <span>中</span>
    <svg viewBox="0 0 20 20"><path d="M13 2c8 5 5 16-4 16-4 0-6-2-8-5 8 2 13-3 12-11z" fill="#2c6ddb"/></svg>
    <svg viewBox="0 0 20 20"><circle cx="5" cy="6" r="3" fill="none" stroke="#2c6ddb" stroke-width="2"/><circle cx="14" cy="11" r="3" fill="#2c6ddb"/><path d="M16 10q1 6-4 8" fill="none" stroke="#2c6ddb" stroke-width="2"/></svg>
    <svg viewBox="0 0 20 20"><circle cx="10" cy="10" r="5" fill="none" stroke="#2c6ddb" stroke-width="2"/><circle cx="10" cy="10" r="8" fill="none" stroke="#2c6ddb" stroke-width="3" stroke-dasharray="2 4.28"/></svg>
  </div>
</footer>

<div class="taskbar">
  <div class="apps">
    <button aria-label="开始"><svg viewBox="0 0 28 28"><path d="M0 0h13v13H0zM15 0h13v13H15zM0 15h13v13H0zM15 15h13v13H15z" fill="#0c86dc"/></svg></button>
    <button aria-label="搜索"><svg viewBox="0 0 28 28"><circle cx="13" cy="12" r="10" fill="#e4e9f0" stroke="#333" stroke-width="3"/><path d="M20 19l7 8" stroke="#222" stroke-width="3"/></svg></button>
    <button aria-label="任务视图"><svg viewBox="0 0 28 28"><path d="M0 7h21v20H0z" fill="#2c2c2e"/><path d="M8 0h20v19H8z" fill="#f2f2f2" opacity=".85"/></svg></button>
    <button aria-label="应用商店"><svg viewBox="0 0 28 28"><path d="M8 6V1h12v5" fill="none" stroke="#4eb6e4" stroke-width="2"/><rect y="5" width="28" height="23" rx="3" fill="#15568e"/><path d="M8 11h5v5H8z" fill="#e8552e"/><path d="M15 11h5v5h-5z" fill="#7cba3a"/><path d="M8 18h5v5H8z" fill="#45a8e0"/><path d="M15 18h5v5h-5z" fill="#f3b92c"/></svg></button>
    <button aria-label="Illustrator"><span class="adobe ai">Ai</span></button>
    <button aria-label="Photoshop"><span class="adobe ps">Ps</span></button>
    <button class="run" aria-label="文件资源管理器"><svg viewBox="0 0 28 28"><path d="M0 2h10l3 4h15v21H0z" fill="#fac846"/><path d="M0 2h10l2 5H0z" fill="#d89a1c"/><path d="M5 27v-6q0-3 3-3h12q3 0 3 3v6z" fill="#2472b8"/></svg></button>
    <button class="run alert" aria-label="聊天"><svg viewBox="0 0 28 28"><circle cx="14" cy="14" r="14" fill="#9ea3a2"/><path d="M3 15l5 2 0-9 4 8 2 0 8-5-3 6 7-1-4 7-8 5-7-4z" fill="#46321c"/><path d="M8 21l10-7" stroke="#c08a3c" stroke-width="2"/></svg></button>
    <button class="run" aria-label="浏览器"><svg viewBox="0 0 28 28"><path d="M24 5A14 14 0 1 0 24 23L18 18a6 6 0 1 1 0-8z" fill="#3f7fea"/><circle cx="14" cy="14" r="6" fill="#2e9e58" stroke="#e8eef8" stroke-width="1.5"/><path d="M19 8l8 3v8l-8 1 2-6z" fill="#f2c43a"/></svg></button>
    <button class="run" aria-label="WPS"><svg viewBox="0 0 28 28"><path d="M0 2h12l2 5 3 9 4-8h-4l2-6h9L19 27h-5l-3-9-2 9H8zM5 6l4 12 3-6-2-6z" fill="#e2452c" fill-rule="evenodd"/></svg></button>
    <button class="run" aria-label="录屏"><svg viewBox="0 0 28 28"><circle cx="14" cy="14" r="14" fill="#888"/><circle cx="14" cy="14" r="12" fill="#000" stroke="#eee"/><circle cx="14" cy="14" r="7" fill="#f02a20"/></svg></button>
    <button class="run" aria-label="任务管理器"><svg viewBox="0 0 28 28"><path d="M1 3h27v22H1z" fill="#dcebf4" stroke="#8fa3b2" stroke-width="2"/><path d="M2 23l4-7 3-9 3 10 2 2 3-8 2 8 2-2 3 4 3 2z" fill="#56aede"/></svg></button>
    <button class="run current" aria-label="FreeCAD"><svg viewBox="0 0 28 28"><use href="#fc"/></svg></button>
  </div>
  <div class="tray">
    <svg viewBox="0 0 20 20"><path d="M4 13l6-6 6 6" fill="none" stroke="#333" stroke-width="2"/></svg>
    <svg viewBox="0 0 20 20"><path d="M8 1h4v4h6v9h-6v5H8v-5H2V5h6zM5 8h3v3H5zM12 8h3v3h-3z" fill="none" stroke="#666"/></svg>
    <svg class="c-gray" viewBox="0 0 20 20"><use href="#pen"/></svg>
    <svg viewBox="0 0 20 20"><path d="M13 3H2v12h15V9M6 19h8M10 15v4" fill="none" stroke="#333" stroke-width="1.5"/><path d="M15 1h4v6h-4zM17 7v7" fill="none" stroke="#333" stroke-width="1.5"/></svg>
    <svg viewBox="0 0 20 20"><path d="M1 7h4l4-4v14l-4-4H1zM12 7q2 3 0 6M14 5q4 5 0 10M16 3q6 7 0 14" fill="none" stroke="#333" stroke-width="1.3"/></svg>
    <time>21:18<br>2023/8/6</time>
  </div>
</div>
</body>
</html>
```

FILE: styles.css
```css
:root {
  --bg: #333333;
  --dark: #292929;
  --raised: #3c3c3c;
  --accent: #4f79b7;
  --text: #d2d2d2;
  --ui: "Noto Sans", "Noto Sans CJK SC", sans-serif;
  --mono: "Liberation Mono", "Noto Sans CJK SC", monospace;
}

* { box-sizing: border-box; }

body {
  margin: 0;
  height: 100vh;
  display: flex;
  flex-direction: column;
  overflow: hidden;
  background: var(--bg);
  color: var(--text);
  font: 15px/20px var(--ui);
}

button {
  margin: 0;
  padding: 0;
  border: 0;
  background: none;
  color: inherit;
  font: inherit;
}

svg { display: block; flex: none; }
.sprite { position: absolute; width: 0; height: 0; }

/* title bar */
.titlebar {
  flex: none;
  display: flex;
  align-items: center;
  height: 26px;
  padding-bottom: 2px;
  background: linear-gradient(90deg, #f0f3f9, #ebf1fb 55%, #eef5f8);
  border-bottom: 1px solid #888;
  color: #222;
}
.titlebar-logo { width: 20px; height: 20px; margin-left: -2px; }
.titlebar h1 { margin: 0 0 0 6px; font-size: 14px; font-weight: 400; }
.wincontrols { display: flex; margin-left: auto; }
.wincontrols button { width: 54px; height: 20px; display: grid; place-items: center; }
.wincontrols svg { width: 13px; height: 13px; }

/* menu bar */
.menubar {
  flex: none;
  display: flex;
  gap: 19px;
  height: 26px;
  padding-left: 6px;
  background: var(--dark);
  color: #dcdcdc;
  white-space: nowrap;
}

/* tool bars */
.toolbars { flex: none; }
.row { display: flex; align-items: center; height: 50px; --drop: 22px; --grip: 23px; }
.row-design { height: 49px; --drop: 24px; --grip: 27px; }
.grip {
  flex: none;
  width: var(--grip);
  height: 36px;
  background: radial-gradient(circle, #707070 1px, transparent 1px) right 2px top / 4px 4px;
  background-clip: content-box;
  background-origin: content-box;
  padding: 0 2px 0 calc(var(--grip) - 10px);
}
.row > .grip:first-child { width: 16px; padding-left: 6px; }
.sep { flex: none; width: 12px; height: 30px; background: linear-gradient(#999, #999) center / 1px 100% no-repeat; }
.tb { flex: none; position: relative; width: 44px; height: 40px; display: grid; place-items: center; }
.tb svg { width: 27px; height: 27px; }
.tb .mini { position: absolute; left: 29px; top: 30px; width: 11px; height: 8px; }
.tb-on { width: 40px; margin: 0 1px 0 3px; background: var(--accent); }
.drop { flex: none; width: var(--drop); height: 40px; padding: 30px 0 0 6px; }
.drop svg { width: 11px; height: 8px; }
.macros { flex: none; display: flex; align-items: center; margin: 0 6px 0 -1px; }
.tt { flex: none; padding: 2px 15px 0; font: 12px/20px var(--mono); color: #e0e0e0; }

.workbench { position: relative; width: 217px; height: 26px; display: flex; background: var(--dark); }
.workbench select {
  width: 194px;
  height: 26px;
  padding: 0 0 0 30px;
  border: 0;
  appearance: none;
  background: var(--accent);
  color: #fff;
  font: bold 14px/26px var(--mono);
}
.wb-icon { position: absolute; left: 3px; top: 4px; width: 20px; height: 19px; }
.wb-arrow { width: 12px; height: 9px; margin: 9px 0 0 6px; }

/* workspace */
.workspace { flex: 1; min-height: 0; display: flex; }

.dock { flex: none; width: 484px; padding-left: 5px; display: flex; flex-direction: column; min-height: 0; }
.dock-title { flex: none; display: flex; align-items: center; height: 22px; background: var(--dark); color: #a8a8a8; font-size: 14px; margin-bottom: 4px; }
.dock-title span { width: 432px; text-align: center; }
.dock-title button { width: 22px; height: 20px; display: grid; place-items: center; color: #999; }
.dock-title svg { width: 10px; height: 10px; }

.tabs { flex: none; display: flex; gap: 2px; height: 32px; padding-left: 2px; }
.tab { width: 71px; background: var(--raised); color: #999; font-size: 14px; }
.tab-on { width: 68px; background: none; color: #fff; }
.tabs-top { margin-bottom: 8px; }
.tabs-top .tab-on { box-shadow: inset 0 5px var(--accent); }
.tabs-bottom { margin-top: 8px; padding-left: 1px; }
.tabs-bottom .tab-on { box-shadow: inset 0 -5px var(--accent); }

.panel { display: flex; min-height: 0; min-width: 0; }
.panel-tree { flex: 292 1 0; }
.panel-props { flex: 303 1 0; }
.panel-main { flex: 1; display: flex; flex-direction: column; min-width: 0; }

.scroll { flex: none; width: 18px; padding: 2px 0 4px; display: flex; flex-direction: column; align-items: center; gap: 7px; background: #282828; }
.scroll svg { width: 12px; height: 8px; }
.track { flex: 1; width: 9px; }
.thumb { background: #6a6a6a; }
.thumb-tree { height: 66%; }
.thumb-props { height: 56%; }

/* model tree */
.tree-head { flex: none; display: flex; height: 39px; line-height: 39px; background: var(--dark); }
.tree-head span { padding-left: 7px; }
.tree-head span:first-child { width: 215px; border-right: 2px solid var(--bg); }
.tree { flex: 1; min-height: 0; position: relative; display: grid; grid-template-rows: repeat(10, 1fr); background: var(--raised); }
.node { display: flex; align-items: center; }
.node > svg { width: 16px; height: 18px; margin: 0 9px 0 5px; }
.node label { display: flex; align-items: center; align-self: stretch; padding-left: 7px; }
.node label svg { width: 17px; height: 18px; margin: 0 8px 0 5px; }
.node input {
  appearance: none;
  width: 16px;
  height: 16px;
  margin: 0;
  background: #464646;
}
.node .lit { width: 166px; background: #e6e6fc; color: #dadae2; font-weight: 700; }
.node .lit input { border: 1px solid #444; background: none; }
.strong { font-weight: 700; }
.picked { width: 268px; background: var(--accent); color: #e4e4d8; }
.picked input { position: relative; background: #555; }
.picked input::after {
  content: "";
  position: absolute;
  left: 3px;
  top: 4px;
  width: 10px;
  height: 5px;
  border: solid #fff;
  border-width: 0 0 3px 3px;
  transform: rotate(-45deg);
}

/* branch guides */
.g { flex: none; position: relative; width: 24px; align-self: stretch; background-repeat: no-repeat; }
.bar { background-image: linear-gradient(#777, #777); background-size: 1px 100%; background-position: 12px 0; }
.tee, .end { background-image: linear-gradient(#777, #777), linear-gradient(#777, #777); background-position: 12px 0, 12px 50%; }
.tee { background-size: 1px 100%, 12px 1px; }
.end { background-size: 1px 50%, 12px 1px; }
.ex {
  position: absolute;
  left: 8px;
  top: calc(50% - 6px);
  width: 8px;
  height: 8px;
  border: solid #d8d8d8;
  border-width: 0 3px 3px 0;
  transform: rotate(45deg);
}
.ex.shut { left: 6px; top: calc(50% - 4px); transform: rotate(-45deg); }
.pointer { position: absolute; left: 115px; top: 135px; width: 72px; height: 72px; }

.split-h { flex: none; height: 30px; background: repeating-linear-gradient(90deg, #ddd 0 7px, transparent 7px 10px) 216px 14px / 47px 3px no-repeat; }

/* property table */
.props { flex: 1; height: 100%; table-layout: fixed; border-collapse: collapse; background: var(--bg); }
.props th { text-align: left; font-weight: 400; padding: 0 7px; background: var(--dark); }
.props thead tr { height: 39px; }
.props thead th:first-child { width: 120px; border-right: 1px solid #444; }
.props .grp th { font-weight: 700; padding-left: 8px; }
.props td { position: relative; padding: 0 0 0 4px; white-space: nowrap; overflow: hidden; }
.props td:first-child {
  width: 120px;
  padding-left: 27px;
  border-right: 1px solid #444;
  background: linear-gradient(#777, #777) 11px 0 / 1px 100% no-repeat, linear-gradient(#777, #777) 11px 50% / 13px 1px no-repeat;
}
.props tbody tr:nth-child(odd) { background-color: var(--raised); }
.props .sel td:first-child { background-color: var(--accent); color: #fff; }

.split-v { flex: none; width: 20px; background: repeating-linear-gradient(#ddd 0 7px, transparent 7px 10px) 12px 342px / 3px 47px no-repeat; }

/* 3D view and its document tabs */
.mdi { flex: 1; min-width: 0; display: flex; flex-direction: column; }
.view3d { flex: 1; min-height: 0; position: relative; background: linear-gradient(#333666, #9898ae); }
.view3d > svg { position: absolute; inset: 0; width: 100%; height: 100%; }
.doctabs { flex: none; display: flex; height: 37px; }
.doctab { display: flex; align-items: center; padding: 0 9px 0 15px; background: var(--raised); color: #929292; font: 13px/20px var(--mono); }
.doctab .fcicon { width: 18px; height: 19px; margin-right: 14px; }
.doctab a { color: inherit; text-decoration: none; white-space: nowrap; }
.doctab button { width: 14px; height: 14px; margin-left: 25px; display: grid; place-items: center; color: #999; }
.doctab button svg { width: 13px; height: 13px; }
.doctab-on { background: #303030; color: #fff; box-shadow: inset 0 -5px #5477ae; }

/* status bar */
.status { flex: none; position: relative; z-index: 1; display: flex; align-items: center; height: 42px; padding: 0 3px 0 7px; }
.status-msg { flex: 1; font: 13px/20px var(--mono); color: #eee; }
.navstyle { display: flex; align-items: center; gap: 7px; width: 113px; height: 34px; padding-left: 15px; background: var(--accent); color: #dce6f4; font: 12px/20px var(--mono); margin-right: 14px; }
.navstyle svg { width: 14px; height: 18px; }
.dims { width: 216px; height: 26px; padding: 0 23px; border: 1px solid #484848; background: var(--dark); color: #ddd; font: 12px/20px var(--mono); }
.ime { position: absolute; right: 0; bottom: -2px; width: 155px; height: 30px; padding: 0 8px; display: flex; align-items: center; justify-content: space-between; background: #fff; color: #2c6ddb; font-weight: 700; font-size: 18px; }
.ime svg { width: 19px; height: 19px; }
.c-blue { color: #2c6ddb; }
.c-gray { color: #666; }

/* taskbar */
.taskbar { flex: none; position: relative; display: flex; align-items: center; height: 55px; padding: 0 20px 0 523px; background: linear-gradient(90deg, #dfe9f8, #cfdaee 35%, #d6e1f2 65%, #e2eefa 90%); color: #333; }
.apps { display: flex; gap: 5px; }
.apps button { position: relative; width: 48px; height: 48px; display: grid; place-items: center; border-radius: 5px; }
.apps svg { width: 28px; height: 28px; }
.apps .run::after { content: ""; position: absolute; bottom: 1px; left: 21px; width: 6px; height: 3px; border-radius: 2px; background: #888c94; }
.apps .alert { background: #fae4e2; }
.apps .alert::after { background: #c42b1c; }
.apps .current { background: #ecf2fb; }
.apps .current::after { left: 15px; width: 18px; background: #1a74c4; }
.adobe { width: 28px; height: 28px; font: bold 15px/24px "Open Sans", sans-serif; border: 2px solid #b8794e; background: #2e1606; color: #f08a1c; text-align: center; }
.ps { border-color: #8494cc; background: #1c2470; color: #a8d4f8; }
.tray { display: flex; align-items: center; margin-left: auto; }
.tray svg { width: 20px; height: 20px; margin-right: 20px; }
.tray svg:nth-child(2), .tray svg:nth-child(3) { margin-right: 25px; }
.tray svg:nth-child(4) { margin-right: 9px; }
.tray time { width: 58px; text-align: right; font-size: 14px; line-height: 19px; }
```
